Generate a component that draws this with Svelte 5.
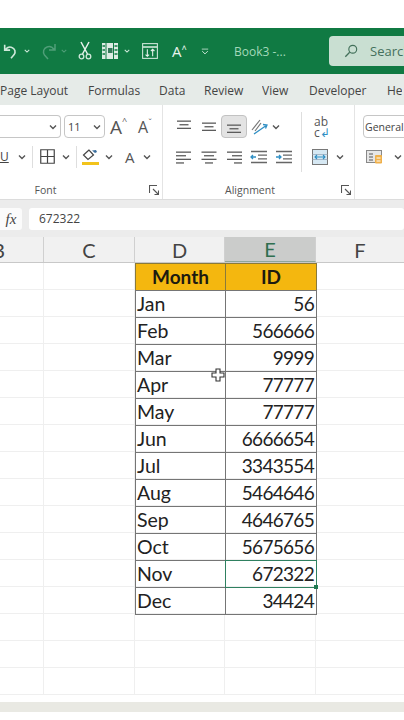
<script lang="ts">
  const tabs = [
    { label: "Page Layout", w: 88 },
    { label: "Formulas", w: 71 },
    { label: "Data", w: 45 },
    { label: "Review", w: 58 },
    { label: "View", w: 47 },
    { label: "Developer", w: 78 },
    { label: "Help", w: 15 },
  ];

  const rows: [string, string][] = [
    ["Jan", "56"],
    ["Feb", "566666"],
    ["Mar", "9999"],
    ["Apr", "77777"],
    ["May", "77777"],
    ["Jun", "6666654"],
    ["Jul", "3343554"],
    ["Aug", "5464646"],
    ["Sep", "4646765"],
    ["Oct", "5675656"],
    ["Nov", "672322"],
    ["Dec", "34424"],
  ];
  const emptyRows = Array.from({ length: 3 });
  const para = [15, 10, 15, 8];
  const vbars = [14, 9, 14];

  function lineX(width: number, align: string) {
    if (align === "l") return 1;
    if (align === "r") return 17 - width;
    return 9 - width / 2;
  }
</script>

{#snippet chev(cls = "")}
  <svg class="chev {cls}" viewBox="0 0 8 6" width="8" height="6"><path d="M1 1.500 4 4.500 7 1.500" fill="none" stroke="currentColor" stroke-width="1.400" /></svg>
{/snippet}

{#snippet launcher()}
  <svg viewBox="0 0 10 10" width="10" height="10" class="launcher">
    <path d="M.5 8V.5H8M9.500 9.500 4 4M9.500 5.500v4h-4" fill="none" stroke="#555" stroke-width="1.100" />
  </svg>
{/snippet}

{#snippet bars(widths: number[], align: string, top = 1.5)}
  <svg viewBox="0 0 18 14" width="18" height="14">
    {#each widths as w, i}
      <rect x={lineX(w, align)} y={top + i * 3.6} width={w} height="1.300" fill="#5c5c5c" />
    {/each}
  </svg>
{/snippet}

{#snippet indent(dir: string)}
  <svg viewBox="0 0 18 14" width="18" height="14">
    <path d="M1 1.500h16M8 5.200h9M8 8.800h9M1 12.500h16" stroke="#666" stroke-width="1.300" />
    {#if dir === "out"}
      <path d="M6 7H1M3 5 1 7l2 2" fill="none" stroke="#2f8fc4" stroke-width="1.300" />
    {:else}
      <path d="M1 7h5M4 5l2 2-2 2" fill="none" stroke="#2f8fc4" stroke-width="1.300" />
    {/if}
  </svg>
{/snippet}

<div class="screen">
  <div class="topgap"></div>

  <header class="titlebar">
    <svg class="undo" viewBox="0 0 20 20" width="18" height="18">
      <path d="M3 3v6h6M3.500 9c2-3 5-4 7.500-3 3.500 1.300 4.500 5 2.500 8l-3.500 4" fill="none" stroke="#cfe8da" stroke-width="1.800" />
    </svg>
    {@render chev("on-green first")}
    <svg class="redo" viewBox="0 0 20 20" width="20" height="20">
      <path d="M17 3v6h-6M16.500 9c-2-3-5-4-7.500-3-3.500 1.300-4.500 5-2.500 8l3.500 4" fill="none" stroke="#4f9e78" stroke-width="1.500" />
    </svg>
    {@render chev("dim-green")}
    <svg class="cut" viewBox="0 0 14 20" width="14" height="20">
      <path d="M3 1 9.500 13M11 1 4.500 13" stroke="#e8f3ed" stroke-width="1.500" fill="none" />
      <circle cx="3.500" cy="15.500" r="2.300" fill="none" stroke="#cfe8da" stroke-width="1.300" />
      <circle cx="10.500" cy="15.500" r="2.300" fill="none" stroke="#cfe8da" stroke-width="1.300" />
    </svg>
    <svg class="film" viewBox="0 0 16 16" width="16" height="16">
      <rect width="16" height="16" fill="#dcebe3" />
      <path d="M4 0v16M11.500 0v16" stroke="#107a43" stroke-width="1" />
      <path d="M.5 3h2.500M.5 7h2.500M.5 11h2.500M12.500 3h3M12.500 7h3M12.500 11h3" stroke="#107a43" stroke-width="1.500" />
      <rect x="6" y="5" width="4.500" height="5" fill="#35795a" />
    </svg>
    {@render chev("on-green after-film")}
    <svg class="sort" viewBox="0 0 18 18" width="16" height="16">
      <rect x=".7" y=".7" width="16.600" height="16.600" fill="none" stroke="#cfe8da" stroke-width="1.200" />
      <path d="M1 4.500h16" stroke="#cfe8da" stroke-width="1.800" />
      <path d="M6 7v8M4 13l2 2 2-2M12 15V7M10 9l2-2 2 2" fill="none" stroke="#e8f3ed" stroke-width="1.200" />
    </svg>
    <span class="qat-font">A<sup>˄</sup></span>
    <svg class="more" viewBox="0 0 10 8" width="8" height="7">
      <path d="M1 1h8" stroke="#cfe8da" stroke-width="1" /><path d="M1.500 3.500 5 7l3.500-3.500" fill="none" stroke="#cfe8da" stroke-width="1.200" />
    </svg>
    <span class="book">Book3 -...</span>
    <div class="search">
      <svg viewBox="0 0 16 16" width="14" height="14">
        <circle cx="10" cy="6" r="4.500" fill="none" stroke="#42705a" stroke-width="1.300" />
        <path d="M6.500 9.500 1.500 14.500" stroke="#42705a" stroke-width="1.500" />
      </svg>
      <span>Search</span>
    </div>
  </header>

  <nav class="tabs">
    {#each tabs as tab}
      <span style="flex-basis: {tab.w}px; width: {tab.w}px">{tab.label}</span>
    {/each}
  </nav>

  <section class="ribbon">
    <div class="group font-group">
      <div class="tools">
        <div class="row">
          <div class="combo font-name">{@render chev()}</div>
          <div class="combo font-size"><span>11</span>{@render chev()}</div>
          <span class="grow-a">A<small>^</small></span>
          <span class="shrink-a">A<small>ˇ</small></span>
        </div>
        <div class="row second">
          <span class="underline">U</span>
          {@render chev()}
          <i class="vsep"></i>
          <svg class="borders" viewBox="0 0 15 15" width="15" height="15"><path d="M.75.75h13.500v13.500H.75zM7.500.75v13.500M.75 7.500h13.500" fill="none" stroke="#444" stroke-width="1.200" /></svg>
          {@render chev()}
          <i class="vsep"></i>
          <span class="fill">
            <svg viewBox="0 0 16 12" width="16" height="12">
              <path d="M7 1 1.500 6 6 10.500 11.500 6z" fill="#fff" stroke="#444" stroke-width="1.200" />
              <path d="M10 1.500 13 4 15 3l-1-2z" fill="#3b6f9e" />
            </svg>
            <b></b>
          </span>
          {@render chev()}
          <span class="text-a">A</span>
          {@render chev()}
        </div>
      </div>
      <footer><span>Font</span>{@render launcher()}</footer>
    </div>

    <div class="group align-group">
      <div class="align-tools">
        <div class="tools align-main">
          <div class="row icons">
            <span class="ic">{@render bars(vbars, "c", 0.5)}</span>
            <span class="ic">{@render bars(vbars, "c", 2.5)}</span>
            <span class="ic picked">{@render bars(vbars, "c", 4.5)}</span>
            <span class="ic">
              <svg viewBox="0 0 20 18" width="20" height="18">
                <path d="M3 12 11 2M6 13l6-8" stroke="#777" stroke-width="1.200" fill="none" />
                <path d="M5 16 18 7M14 6.500 18 7l-1.500 3.500" stroke="#2f8fc4" stroke-width="1.300" fill="none" />
              </svg>
            </span>
            {@render chev()}
          </div>
          <div class="row icons second">
            <span class="ic">{@render bars(para, "l")}</span>
            <span class="ic">{@render bars(para, "c")}</span>
            <span class="ic">{@render bars(para, "r")}</span>
            <span class="ic">{@render indent("out")}</span>
            <span class="ic">{@render indent("in")}</span>
          </div>
        </div>
        <i class="vsep tall"></i>
        <div class="tools wrap-tools">
          <div class="row">
            <span class="wrap-ab">ab<br />c<em>↲</em></span>
          </div>
          <div class="row second">
            <svg viewBox="0 0 16 16" width="16" height="16">
              <rect x=".5" y=".5" width="15" height="15" fill="#d6e8f3" stroke="#777" />
              <path d="M.5 5.500h15M.5 10.500h15" stroke="#9ab" stroke-width=".8" />
              <path d="M3 8h10M5 6 3 8l2 2M11 6l2 2-2 2" fill="none" stroke="#2f8fc4" stroke-width="1.100" />
            </svg>
            {@render chev()}
          </div>
        </div>
      </div>
      <footer><span>Alignment</span>{@render launcher()}</footer>
    </div>

    <div class="group number-group">
      <div class="tools">
        <div class="row"><div class="combo general">General</div></div>
        <div class="row second">
          <svg viewBox="0 0 18 14" width="18" height="14">
            <rect x=".5" y=".5" width="15" height="12" fill="#e6e6e6" stroke="#888" />
            <path d="M3 4h4M3 7h4M3 10h4" stroke="#555" stroke-width="1.200" />
            <rect x="9" y="5" width="7" height="8.500" rx="1" fill="#f0b04a" />
            <path d="M10.500 8h4M10.500 11h4" stroke="#fff" stroke-width="1" />
          </svg>
          {@render chev()}
        </div>
      </div>
    </div>
  </section>

  <div class="formula-wrap">
    <div class="fx"><em>fx</em></div>
    <div class="formula">672322</div>
  </div>

  <div class="sheet">
    <div class="cols">
      <span class="clip">B</span>
      <span>C</span>
      <span>D</span>
      <span class="active">E</span>
      <span>F</span>
    </div>

    <div class="row-line">
      <span></span><span></span>
      <span class="cell head">Month</span>
      <span class="cell head">ID</span>
      <span></span>
    </div>
    {#each rows as [month, id]}
      <div class="row-line">
        <span></span><span></span>
        <span class="cell">{month}</span>
        <span class="cell num" class:selected={id === "672322"}>{id}</span>
        <span></span>
      </div>
    {/each}
    {#each emptyRows as _}
      <div class="row-line"><span></span><span></span><span></span><span></span><span></span></div>
    {/each}

    <svg class="pointer" viewBox="0 0 14 14" width="14" height="14">
      <path d="M5 1h4v4h4v4H9v4H5V9H1V5h4z" fill="#fff" stroke="#333" stroke-width="1.100" />
    </svg>
  </div>

  <div class="scroll"></div>
</div>

<style>
  :global(body) {
    margin: 0;
    background: #fff;
  }

  .screen {
    width: 404px;
    height: 720px;
    overflow: hidden;
    display: flex;
    flex-direction: column;
    font-family: "Open Sans", "Liberation Sans", sans-serif;
    color: #444;
    position: relative;
    background: #fff;
  }

  .topgap {
    height: 28px;
    flex: none;
  }

  .titlebar {
    height: 46px;
    flex: none;
    background: #107a43;
    display: flex;
    align-items: center;
    padding-left: 2px;
    color: #cfe8da;
    overflow: hidden;
  }

  .titlebar svg {
    flex: none;
  }

  .chev {
    flex: none;
    color: #555;
  }

  .chev.on-green {
    color: #cfe8da;
    width: 6px;
  }

  .chev.first {
    margin-left: 4px;
  }

  .chev.after-film {
    margin-left: 6px;
  }

  .chev.dim-green {
    color: #4f9e78;
    margin-left: 3px;
    width: 6px;
  }

  .redo {
    margin-left: 8px;
  }

  .cut {
    margin-left: 11px;
  }

  .film {
    margin-left: 10px;
  }

  .sort {
    margin-left: 12px;
  }

  .qat-font {
    margin-left: 14px;
    width: 22px;
    flex: none;
    font-size: 15px;
    color: #e8f3ed;
  }

  .qat-font sup {
    font-size: 9px;
    line-height: 0;
  }

  .more {
    margin-left: 7px;
  }

  .book {
    margin-left: 25px;
    width: 70px;
    flex: none;
    font-size: 12px;
    color: #a3d9ba;
    white-space: nowrap;
  }

  .search {
    margin-left: 25px;
    flex: none;
    width: 90px;
    height: 30px;
    background: #c9dfd2;
    border-radius: 4px;
    display: flex;
    align-items: center;
    gap: 12px;
    padding-left: 15px;
    font-size: 13px;
    color: #44705c;
  }

  .tabs {
    height: 31px;
    flex: none;
    box-sizing: border-box;
    padding-top: 1px;
    background: #e6ebe8;
    display: flex;
    align-items: center;
    overflow: hidden;
    font-size: 12px;
    color: #444;
    white-space: nowrap;
  }

  .tabs span {
    flex-shrink: 0;
    overflow: hidden;
  }

  .ribbon {
    height: 94px;
    flex: none;
    display: flex;
    background: #fff;
    overflow: hidden;
  }

  .group {
    flex: none;
    display: flex;
    flex-direction: column;
    border-right: 1px solid #e4e4e4;
    box-sizing: border-box;
    position: relative;
  }

  .font-group {
    width: 163px;
  }

  .align-group {
    width: 192px;
  }

  .number-group {
    width: 60px;
    border-right: 0;
  }

  .tools {
    padding-top: 10px;
  }

  .row {
    display: flex;
    align-items: center;
    height: 23px;
  }

  .row.second {
    margin-top: 7px;
  }

  .combo {
    height: 23px;
    box-sizing: border-box;
    border: 1px solid #c6c6c6;
    border-radius: 4px;
    display: flex;
    align-items: center;
    justify-content: space-between;
    font-size: 11px;
    color: #444;
    flex: none;
  }

  .font-name {
    width: 61px;
    border-left: 0;
    border-radius: 0 4px 4px 0;
    justify-content: flex-end;
    padding-right: 3px;
  }

  .font-size {
    width: 41px;
    margin-left: 3px;
    padding: 0 3px;
  }

  .grow-a,
  .shrink-a {
    color: #555;
    display: inline-flex;
    flex: none;
  }

  .grow-a {
    margin-left: 5px;
    font-size: 19px;
    width: 28px;
  }

  .shrink-a {
    font-size: 16px;
  }

  .grow-a small,
  .shrink-a small {
    font-size: 9px;
  }

  .underline {
    width: 10px;
    margin-right: 8px;
    font-size: 12px;
    text-decoration: underline;
    flex: none;
  }

  .vsep {
    width: 1px;
    height: 22px;
    background: #dedede;
    flex: none;
    margin: 0 6px;
  }

  .borders {
    flex: none;
    margin: 0 7px 0 1px;
  }

  .fill {
    display: flex;
    flex-direction: column;
    gap: 1px;
    margin: 0 6px 0 -1px;
    width: 17px;
    flex: none;
  }

  .fill b {
    height: 3px;
    background: #f2c31b;
  }

  .text-a {
    font-size: 15px;
    margin: 0 8px 0 12px;
    color: #555;
    flex: none;
  }

  footer {
    margin-top: auto;
    height: 18px;
    display: flex;
    align-items: center;
    font-size: 10.500px;
    color: #555;
    padding-right: 3px;
  }

  footer span {
    flex: 1;
  }

  .font-group footer span {
    text-align: center;
    padding-right: 58px;
  }

  .align-group footer span {
    text-align: center;
    padding-right: 4px;
  }

  .launcher {
    flex: none;
  }

  .align-tools {
    display: flex;
  }

  .align-main {
    width: 138px;
    padding-left: 8px;
    box-sizing: border-box;
    flex: none;
  }

  .ic {
    width: 25.200px;
    height: 23px;
    display: flex;
    align-items: center;
    justify-content: center;
    flex: none;
    box-sizing: border-box;
  }

  .picked {
    background: #e3e3e3;
    border: 1px solid #c2c2c2;
    border-radius: 4px;
  }

  .vsep.tall {
    height: 60px;
    margin: 7px 0 0;
  }

  .wrap-tools {
    padding-left: 10px;
  }

  .wrap-tools .row:first-child {
    padding-left: 2px;
  }

  .wrap-ab {
    font-size: 12px;
    line-height: 11px;
    color: #555;
    white-space: nowrap;
  }

  .wrap-ab em {
    color: #2f8fc4;
    font-style: normal;
  }

  .wrap-tools .second svg:first-child {
    margin-right: 8px;
    flex: none;
  }

  .number-group .tools {
    padding-left: 8px;
  }

  .general {
    width: 70px;
    padding-left: 1px;
    font-size: 10.500px;
    color: #444;
    overflow: hidden;
  }

  .number-group .second svg:first-child {
    margin: 0 10px 0 3px;
    flex: none;
  }

  .formula-wrap {
    height: 38px;
    flex: none;
    box-sizing: border-box;
    background: #ececec;
    border-top: 1px solid #dcdcdc;
    padding: 8px 0 7px;
    display: flex;
    gap: 7px;
  }

  .fx {
    width: 22px;
    background: #fbfbfb;
    border-radius: 0 3px 3px 0;
    display: flex;
    align-items: center;
    justify-content: center;
    font-family: "Liberation Serif", serif;
    font-size: 15px;
    color: #444;
  }

  .formula {
    flex: 1;
    background: #fff;
    border-radius: 3px;
    padding-left: 10px;
    font-size: 12px;
    line-height: 22px;
    color: #444;
  }

  .sheet {
    position: relative;
    flex: none;
    --grid: 44px 91px 90px 91px 1fr;
    font-family: Lato, "Open Sans", sans-serif;
    color: #222;
  }

  .cols {
    height: 26px;
    display: grid;
    grid-template-columns: var(--grid);
    background: #f1f1f1;
    border-bottom: 1px solid #c8c8c8;
    box-sizing: border-box;
    font-size: 20px;
    color: #444;
  }

  .cols span {
    display: flex;
    align-items: center;
    justify-content: center;
    border-right: 1px solid #d0d0d0;
  }

  .cols span.clip {
    justify-content: flex-start;
    text-indent: -8px;
    overflow: hidden;
  }

  .cols span:last-child {
    border-right: 0;
  }

  .cols .active {
    background: #cbcccb;
    color: #2f6f50;
    border-bottom: 1px solid #8fa69a;
  }

  .row-line {
    height: 27px;
    box-sizing: border-box;
    display: grid;
    grid-template-columns: var(--grid);
    border-bottom: 1px solid #efefef;
  }

  .row-line > span {
    border-right: 1px solid #efefef;
    min-width: 0;
  }

  .row-line > span:last-child {
    border-right: 0;
  }

  .row-line .cell {
    font-size: 19.500px;
    line-height: 28px;
    padding: 0 2px;
    box-sizing: border-box;
    height: 28px;
    outline: 1px solid #757575;
    outline-offset: -1px;
    margin-right: -1px;
    border: 0;
    white-space: nowrap;
    color: #222;
    position: relative;
    z-index: 1;
  }

  .row-line .head {
    background: #f4b70f;
    font-weight: 700;
    font-size: 19px;
    text-align: center;
    color: #1d1a10;
    outline-color: #8a7a3a;
  }

  .row-line .num {
    text-align: right;
    padding-right: 3px;
    font-size: 19px;
    letter-spacing: -0.7px;
  }

  .row-line .selected {
    outline: 1px solid #2f8060;
    z-index: 2;
  }

  .row-line .selected::after {
    content: "";
    position: absolute;
    right: -1px;
    bottom: -1px;
    width: 4px;
    height: 4px;
    background: #1f7a52;
  }

  .pointer {
    position: absolute;
    left: 211px;
    top: 131px;
    z-index: 3;
  }

  .scroll {
    margin-top: 7px;
    height: 10px;
    flex: none;
    background: #e9e9e3;
  }
</style>
